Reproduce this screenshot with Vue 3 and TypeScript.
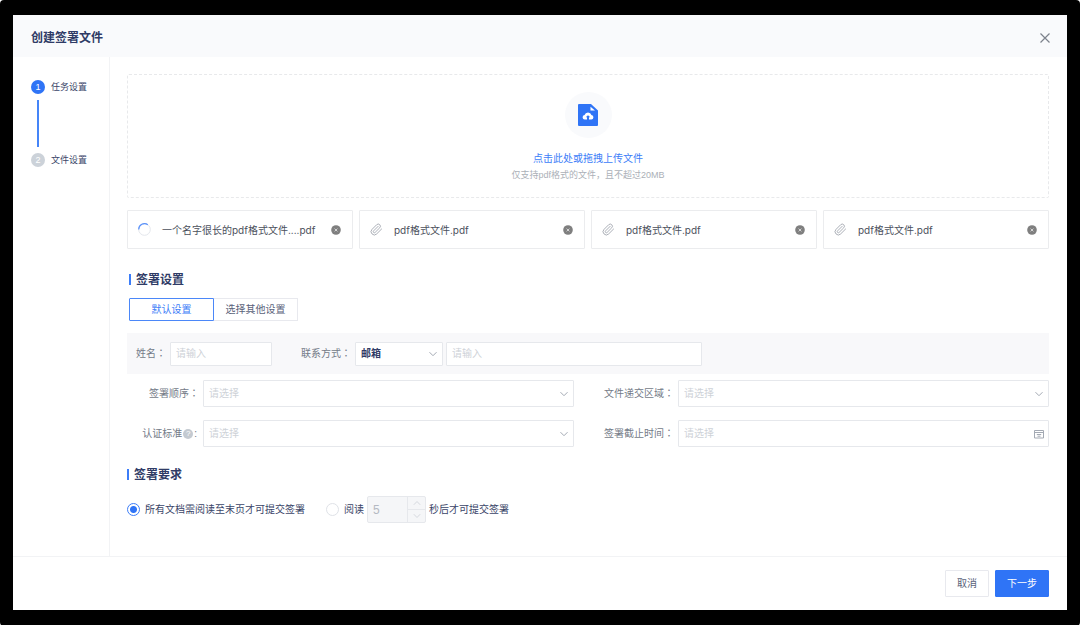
<script setup lang="ts">
import { ref } from 'vue'

interface Step {
  no: number
  title: string
  active: boolean
}

interface UploadFile {
  id: number
  name: string
  loading: boolean
}

const steps: Step[] = [
  { no: 1, title: '任务设置', active: true },
  { no: 2, title: '文件设置', active: false },
]

const files = ref<UploadFile[]>([
  { id: 1, name: '一个名字很长的pdf格式文件....pdf', loading: true },
  { id: 2, name: 'pdf格式文件.pdf', loading: false },
  { id: 3, name: 'pdf格式文件.pdf', loading: false },
  { id: 4, name: 'pdf格式文件.pdf', loading: false },
])

const tabs: string[] = ['默认设置', '选择其他设置']
const activeTab = ref(0)

const userName = ref('')
const contactType = ref('邮箱')
const contact = ref('')
const signOrder = ref('')
const area = ref('')
const standard = ref('')
const deadline = ref('')
const requirement = ref('all')
const seconds = ref(5)

function removeFile(id: number): void {
  files.value = files.value.filter((f) => f.id !== id)
}
</script>

<template>
  <div class="frame">
    <section class="dialog">
      <header class="head">
        <h1>创建签署文件</h1>
        <button class="plain" type="button" aria-label="关闭">
          <svg width="12" height="12" viewBox="0 0 12 12" fill="none" stroke="#7d828c" stroke-width="1.2">
            <path d="M1.5 1.5l9 9M10.5 1.5l-9 9" />
          </svg>
        </button>
      </header>

      <div class="body">
        <ol class="steps">
          <li v-for="s in steps" :key="s.no" :class="{ active: s.active }">
            <span class="dot">{{ s.no }}</span>
            <span>{{ s.title }}</span>
          </li>
        </ol>

        <main class="main">
          <div class="upload">
            <span class="upload-icon">
              <svg width="20" height="22" viewBox="0 0 20 22">
                <path d="M1 0H13L20 6.500V21a1 1 0 0 1-1 1H1a1 1 0 0 1-1-1V1a1 1 0 0 1 1-1Z" fill="#2f74f6" />
                <path d="M12.500 2.800V6.500H17Z" fill="#fff" />
                <path d="M9 15.500H7a2.200 2.200 0 0 1-.4-4.400 3.500 3.500 0 0 1 6.800 0A2.200 2.200 0 0 1 13 15.500H11V13.300h1.300L10 11.200 7.700 13.300H9Z" fill="#fff" />
              </svg>
            </span>
            <button class="plain upload-link" type="button">点击此处或拖拽上传文件</button>
            <p class="hint">仅支持pdf格式的文件，且不超过20MB</p>
          </div>

          <ul class="files">
            <li v-for="f in files" :key="f.id">
              <svg v-if="f.loading" width="13" height="13" viewBox="0 0 13 13" fill="none">
                <circle cx="6.5" cy="6.5" r="5.8" stroke="#e3e6ec" />
                <path d="M.7 6.5A5.8 5.8 0 0 1 9.8 1.7" stroke="#5b92fa" stroke-width="1.2" />
              </svg>
              <svg v-else width="13" height="13" viewBox="0 0 24 24" fill="none" stroke="#a3a8b0" stroke-width="1.7" stroke-linecap="round">
                <path d="m21.44 11.05-9.19 9.19a6 6 0 0 1-8.49-8.49l8.57-8.57A4 4 0 1 1 18 8.84l-8.59 8.57a2 2 0 0 1-2.83-2.83l8.49-8.48" />
              </svg>
              <span class="file-name">{{ f.name }}</span>
              <button class="plain" type="button" aria-label="删除" @click="removeFile(f.id)">
                <svg width="10" height="10" viewBox="0 0 10 10">
                  <circle cx="5" cy="5" r="4.8" fill="#7f7f7f" />
                  <path d="M3.6 3.6l2.8 2.8M6.4 3.6l-2.8 2.8" stroke="#e8e8e8" stroke-width=".8" />
                </svg>
              </button>
            </li>
          </ul>

          <h2 class="inset">签署设置</h2>
          <div class="tabs">
            <button
              v-for="(t, i) in tabs"
              :key="t"
              type="button"
              :class="{ on: activeTab === i }"
              @click="activeTab = i"
            >{{ t }}</button>
          </div>

          <div class="band">
            <label for="user-name">姓名<span class="colon">：</span></label>
            <input id="user-name" v-model="userName" class="field name" type="text" placeholder="请输入">
            <label for="contact-type">联系方式<span class="colon">：</span></label>
            <div class="control type">
              <select id="contact-type" v-model="contactType" class="field filled">
                <option>邮箱</option>
                <option>手机</option>
              </select>
              <svg class="suffix" width="10" height="10" viewBox="0 0 10 10"><path d="M1.5 3.2L5 6.7l3.5-3.5" /></svg>
            </div>
            <input v-model="contact" class="field contact" type="text" placeholder="请输入" aria-label="联系方式">
          </div>

          <div class="grid">
            <label for="order">签署顺序<span class="colon">：</span></label>
            <div class="control">
              <select id="order" v-model="signOrder" class="field">
                <option value="">请选择</option>
              </select>
              <svg class="suffix" width="10" height="10" viewBox="0 0 10 10"><path d="M1.5 3.2L5 6.7l3.5-3.5" /></svg>
            </div>
            <label for="area">文件递交区域<span class="colon">：</span></label>
            <div class="control">
              <select id="area" v-model="area" class="field">
                <option value="">请选择</option>
              </select>
              <svg class="suffix" width="10" height="10" viewBox="0 0 10 10"><path d="M1.5 3.2L5 6.7l3.5-3.5" /></svg>
            </div>
            <label class="with-help" for="standard">
              认证标准
              <span class="help">?</span>:
            </label>
            <div class="control">
              <select id="standard" v-model="standard" class="field">
                <option value="">请选择</option>
              </select>
              <svg class="suffix" width="10" height="10" viewBox="0 0 10 10"><path d="M1.5 3.2L5 6.7l3.5-3.5" /></svg>
            </div>
            <label for="deadline">签署截止时间<span class="colon">：</span></label>
            <div class="control">
              <input id="deadline" v-model="deadline" class="field" type="text" placeholder="请选择">
              <svg class="suffix" width="10" height="10" viewBox="0 0 10 10">
                <path d="M.5 1.5h9v7.5h-9zM.5 3.500h9M2.800 5.500h4.400M3.500 7.200h3" />
              </svg>
            </div>
          </div>

          <h2>签署要求</h2>
          <div class="rules">
            <label><input v-model="requirement" type="radio" name="rule" value="all">所有文档需阅读至末页才可提交签署</label>
            <div class="timed">
              <label><input v-model="requirement" type="radio" name="rule" value="timed">阅读</label>
              <div class="stepper">
                <input v-model="seconds" type="number" aria-label="阅读秒数" disabled>
                <div class="arrows">
                  <button type="button" aria-label="增加" disabled>
                    <svg width="8" height="8" viewBox="0 0 8 8"><path d="M.8 5.8L4 2.500l3.200 3.300" /></svg>
                  </button>
                  <button type="button" aria-label="减少" disabled>
                    <svg width="8" height="8" viewBox="0 0 8 8"><path d="M.8 2.200L4 5.500l3.200-3.300" /></svg>
                  </button>
                </div>
              </div>
              <span>秒后才可提交签署</span>
            </div>
          </div>
        </main>
      </div>

      <footer class="foot">
        <button type="button">取消</button>
        <button class="primary" type="button">下一步</button>
      </footer>
    </section>
  </div>
</template>

<style>
body {
  background: #fff;
}
</style>

<style scoped>
* {
  box-sizing: border-box;
}
.frame {
  display: flex;
  min-height: 100vh;
  padding: 15px 13px 16px;
  background: #000;
  border-radius: 4px;
  font: 10px/16px "Liberation Sans", "Noto Sans CJK SC", sans-serif;
  color: #3a4568;
}
button,
input,
select {
  font: inherit;
  color: inherit;
  margin: 0;
}
button {
  cursor: pointer;
}
h1,
h2,
p,
ul,
ol {
  margin: 0;
  padding: 0;
  list-style: none;
}
.plain {
  display: flex;
  padding: 0;
  border: 0;
  background: none;
}
.dialog {
  flex: 1;
  display: flex;
  flex-direction: column;
  min-width: 0;
  background: #fff;
}
.head {
  display: flex;
  align-items: center;
  justify-content: space-between;
  height: 42px;
  padding: 3px 16px 0 18px;
  background: #f9fafc;
}
h1,
h2 {
  font-size: 12px;
  line-height: 16px;
  font-weight: 700;
  color: #2f3b66;
}
.body {
  flex: 1;
  display: flex;
}
.steps {
  flex: none;
  width: 97px;
  padding: 23px 0 0 18px;
  border-right: 1px solid #f2f3f5;
  font-size: 9px;
  line-height: 14px;
}
.steps li {
  display: flex;
  flex-wrap: wrap;
  align-items: center;
  column-gap: 6px;
}
.steps li.active::after {
  content: "";
  width: 2px;
  height: 47px;
  margin: 6px 60px 6px 6px;
  background: #4585f8;
}
.dot {
  width: 14px;
  height: 14px;
  border-radius: 50%;
  background: #ccd2d9;
  color: #fff;
  text-align: center;
}
.active .dot {
  background: #2f74f6;
}
.main {
  flex: 1;
  min-width: 0;
  padding: 17px 18px 33px 17px;
}
.upload {
  display: flex;
  flex-direction: column;
  align-items: center;
  height: 124px;
  padding-top: 17px;
  border: 1px dashed #e8e9eb;
  border-radius: 2px;
}
.upload-icon {
  display: flex;
  align-items: center;
  justify-content: center;
  width: 47px;
  height: 46px;
  margin-bottom: 13px;
  border-radius: 50%;
  background: #f9fafc;
}
.upload-link {
  color: #3c7df8;
}
.hint {
  font-size: 9px;
  color: #abb0b7;
}
.files {
  display: grid;
  grid-template-columns: repeat(4, 1fr);
  gap: 6px;
  margin: 12px 0 23px;
}
.files li {
  display: flex;
  align-items: center;
  height: 39px;
  padding: 0 11px 0 10px;
  border: 1px solid #ebecee;
  border-radius: 1px;
  font-family: Inter, "Noto Sans CJK SC", sans-serif;
  color: #4b505c;
}
.file-name {
  flex: 1;
  margin-left: 11px;
  white-space: nowrap;
}
h2::before {
  content: "";
  display: inline-block;
  width: 2px;
  height: 11px;
  margin-right: 5px;
  background: #3c7df8;
  vertical-align: -1px;
}
.inset {
  margin-left: 2px;
}
.tabs {
  display: flex;
  margin: 10px 0 12px 2px;
}
.tabs button {
  height: 23px;
  width: 84px;
  padding: 1px 0 0;
  border: 1px solid #e8e9ee;
  border-left: 0;
  background: #fff;
  color: #5a627a;
}
.tabs .on {
  width: 85px;
  border: 1px solid #4b87f8;
  border-radius: 1px 0 0 1px;
  color: #3c7df8;
}
.band {
  display: flex;
  align-items: center;
  height: 41px;
  padding: 0 9px;
  background: #f8f8fa;
}
label {
  color: #747b88;
  white-space: nowrap;
}
.colon {
  font-family: "Noto Sans CJK TC", sans-serif;
}
.field {
  display: block;
  width: 100%;
  height: 27px;
  padding: 0 5px;
  border: 1px solid #e6e8ec;
  border-radius: 1px;
  outline: 0;
  background: #fff;
  color: #ced2d8;
  appearance: none;
}
.field::placeholder {
  color: #ced2d8;
  opacity: 1;
}
.band .field {
  height: 24px;
}
.band .name {
  width: 102px;
  margin: 0 29px 0 4px;
}
.band .type {
  width: 88px;
  margin: 0 3px 0 4px;
}
.band .contact {
  width: 256px;
}
.field.filled {
  color: #2f3b66;
  font-weight: 700;
}
.control {
  position: relative;
}
.suffix {
  position: absolute;
  right: 5px;
  top: 50%;
  margin-top: -5px;
  fill: none;
  stroke: #a3a9b3;
  pointer-events: none;
}
.grid {
  display: grid;
  grid-template-columns: 76px 1fr 104px 1fr;
  row-gap: 13px;
  align-items: center;
  margin: 6px 0 20px;
}
.grid label {
  padding-right: 4px;
  text-align: right;
}
.grid .with-help {
  display: flex;
  align-items: center;
  justify-content: flex-end;
  gap: 1px;
  padding-right: 6px;
}
.help {
  width: 10px;
  height: 10px;
  border-radius: 50%;
  background: #c4cad1;
  color: #fff;
  font-size: 8px;
  line-height: 10px;
  text-align: center;
}
.rules {
  display: flex;
  align-items: center;
  gap: 21px;
  margin-top: 13px;
}
.rules label {
  display: flex;
  align-items: center;
  gap: 5px;
  color: #3a4568;
}
.rules input[type="radio"] {
  width: 13px;
  height: 13px;
  border: 1px solid #dfe2e7;
  border-radius: 50%;
  appearance: none;
}
.rules input[type="radio"]:checked {
  border-color: #3c7df8;
  background: radial-gradient(circle, #2f74f6 3px, #fff 4px);
}
.timed {
  display: flex;
  align-items: center;
  gap: 3px;
}
.stepper {
  display: flex;
  width: 59px;
  height: 27px;
  border: 1px solid #e6e8ec;
  border-radius: 2px;
  background: #f5f6f8;
}
.stepper input {
  flex: 1;
  min-width: 0;
  padding: 0 5px;
  border: 0;
  background: none;
  color: #b4b9c2;
  font-size: 12px;
  appearance: textfield;
}
.arrows {
  display: flex;
  flex-direction: column;
  width: 18px;
  border-left: 1px solid #e6e8ec;
}
.arrows button {
  flex: 1;
  display: flex;
  align-items: center;
  justify-content: center;
  padding: 0;
  border: 0;
  background: none;
}
.arrows button + button {
  border-top: 1px solid #e6e8ec;
}
.arrows path {
  fill: none;
  stroke: #d5d8de;
}
.foot {
  display: flex;
  align-items: center;
  justify-content: flex-end;
  gap: 6px;
  height: 54px;
  padding: 0 18px;
  border-top: 1px solid #f2f3f5;
}
.foot button {
  height: 27px;
  padding: 0 11px;
  border: 1px solid #e8e9ee;
  border-radius: 1px;
  background: #fff;
  color: #5a627a;
}
.foot .primary {
  border-color: #2f74f6;
  background: #2f74f6;
  color: #fff;
}
</style>
